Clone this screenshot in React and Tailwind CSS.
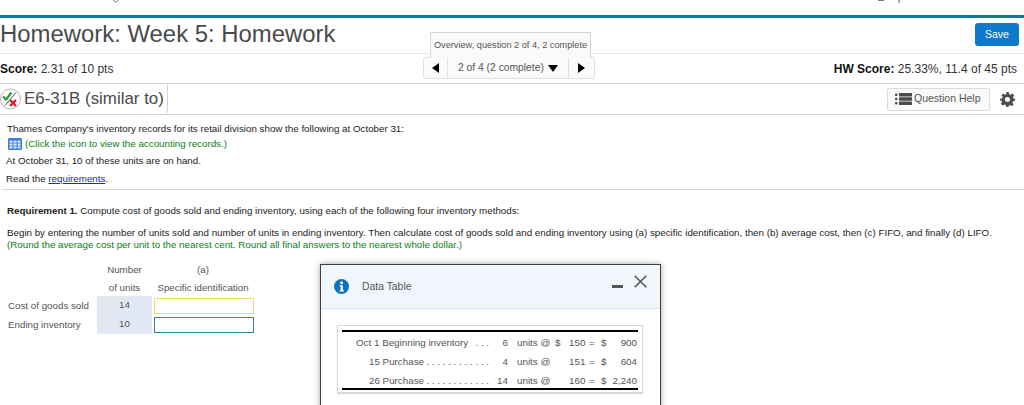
import React from "react";

const F = "font-['Liberation_Sans',Arial,sans-serif]";

function MixedIcon() {
  return (
    <svg width="21" height="22" viewBox="0 0 21 22" className="shrink-0">
      <circle cx="10.5" cy="11" r="10" fill="#fff" stroke="#b5b5b5" strokeWidth="1" />
      <path d="M16 4.5 L5 17.5" stroke="#555" strokeWidth="1" fill="none" />
      <path d="M3 8.5 L6 11.5 L11.5 4.5" stroke="#2f9e3f" strokeWidth="2.2" fill="none" />
      <path d="M10 12 L16 18 M16 12 L10 18" stroke="#d8202f" strokeWidth="2.4" fill="none" />
    </svg>
  );
}

function Gear() {
  return (
    <svg width="15" height="15" viewBox="0 0 24 24" fill="#4d4d4d">
      <path fillRule="evenodd" d="M10 0h4l.7 3.4 2.3 1 2.9-1.9 2.8 2.8-1.9 2.9 1 2.3L24 11v3l-3.2.7-1 2.3 1.9 2.9-2.8 2.8-2.9-1.9-2.3 1L14 24h-4l-.7-3.2-2.3-1-2.9 1.9-2.8-2.8 1.9-2.9-1-2.3L0 14v-3l3.2-.7 1-2.3-1.9-2.9 2.8-2.8 2.9 1.9 2.3-1zM12 8a4 4 0 1 0 0 8 4 4 0 0 0 0-8z" />
    </svg>
  );
}

function ListIcon() {
  return (
    <svg width="17" height="12" viewBox="0 0 17 12" fill="#4a4a4a">
      <rect x="0" y="0.5" width="2.5" height="2.5" rx="1" />
      <rect x="0" y="4.8" width="2.5" height="2.5" rx="1" />
      <rect x="0" y="9" width="2.5" height="2.5" rx="1" />
      <rect x="4" y="0" width="13" height="3.4" rx="0.6" />
      <rect x="4" y="4.3" width="13" height="3.4" rx="0.6" />
      <rect x="4" y="8.6" width="13" height="3.4" rx="0.6" />
    </svg>
  );
}

function GridIcon() {
  return (
    <svg width="14" height="12" viewBox="0 0 14 12" className="shrink-0">
      <rect width="14" height="12" rx="1.5" fill="#3d80d6" />
      <g fill="#dbe8fa">
        <rect x="1.5" y="2.6" width="3" height="2.1" /><rect x="5.5" y="2.6" width="3" height="2.1" /><rect x="9.5" y="2.6" width="3" height="2.1" />
        <rect x="1.5" y="5.5" width="3" height="2.1" /><rect x="5.5" y="5.5" width="3" height="2.1" /><rect x="9.5" y="5.5" width="3" height="2.1" />
        <rect x="1.5" y="8.4" width="3" height="2.1" /><rect x="5.5" y="8.4" width="3" height="2.1" /><rect x="9.5" y="8.4" width="3" height="2.1" />
      </g>
    </svg>
  );
}

const rows = [
  ["Oct 1 Beginning inventory", ". . .", "6", "$", "150", "900", "pl-[14px]"],
  ["15 Purchase", ". . . . . . . . . . . .", "4", "", "151", "604", "pl-[27px]"],
  ["26 Purchase", ". . . . . . . . . . . .", "14", "", "160", "2,240", "pl-[27px]"],
];

function DataTable() {
  return (
    <div className="absolute left-[320px] top-[264px] w-[341px] h-[160px] bg-white border border-[#3f3f3f] shadow-[0_0_6px_rgba(0,0,0,0.35)]">
      <div className="h-[44px] bg-[#f1f6fd] border-b border-[#cfe2f5] flex items-center pl-[13px] pr-[13px]">
        <svg width="15" height="15" viewBox="0 0 15 15" className="shrink-0">
          <circle cx="7.5" cy="7.5" r="7.5" fill="#0c71c3" />
          <circle cx="7.6" cy="3.7" r="1.5" fill="#fff" />
          <path d="M5.6 6.2h3.3v5h1v1.3H5.6v-1.3h1v-3.7h-1z" fill="#fff" />
        </svg>
        <span className="ml-[13px] text-[10.4px] text-[#555]">Data Table</span>
        <div className="ml-auto flex items-start gap-[11px] -mt-[10px]">
          <div className="w-[11px] h-[3px] bg-[#555] mt-[10px]" />
          <svg width="13" height="13" viewBox="0 0 13 13">
            <path d="M0.7 0.7 L12.3 12.3 M12.3 0.7 L0.7 12.3" stroke="#4a4a4a" strokeWidth="1.4" fill="none" />
          </svg>
        </div>
      </div>
      <div className="mt-[16px] ml-[16px] w-[306px] h-[68px] border border-[#d8d8d8] shadow-[0_1px_1px_rgba(0,0,0,0.15)] px-[4px] pt-[4px]">
        <div className="border-t-2 border-b-2 border-black h-[60px] pt-[2px] text-[9.8px] text-[#555]">
          {rows.map((r) => (
            <div key={r[0]} className="flex h-[19px] items-center whitespace-nowrap">
              <div className={`w-[147px] flex justify-between ${r[6]}`}>
                <span>{r[0]}</span>
                <span className="whitespace-pre">{r[1]}</span>
              </div>
              <span className="w-[19px] text-right">{r[2]}</span>
              <span className="ml-[9px] w-[38px]">units @</span>
              <span className="w-[14px]">{r[3]}</span>
              <span className="w-[20px]">{r[4]}</span>
              <span className="w-[12px]">=</span>
              <span className="w-[10px]">$</span>
              <span className="w-[26px] text-right">{r[5]}</span>
            </div>
          ))}
        </div>
      </div>
    </div>
  );
}

export default function App() {
  return (
    <div className={`${F} relative w-[1024px] h-[405px] overflow-hidden bg-white text-[#333]`}>
      <div className="h-[15px]" />
      <div className="h-[3px] bg-[#08799f]" />

      <div className="h-[36px] border-b border-[#e6e6e6] flex items-start justify-between">
        <h1 className="text-[23.9px] leading-[31px] text-[#4a4a4a]">Homework: Week 5: Homework</h1>
        <button className="mt-[5px] mr-[5px] w-[44px] h-[23px] rounded-[3px] bg-[#0f79cc] text-white text-[10.5px]">Save</button>
      </div>

      <div className="relative h-[30px] border-b border-[#cfd3dc] flex items-center justify-between text-[12px] text-[#333]">
        <div><b className="text-[#111]">Score:</b> 2.31 of 10 pts</div>
        <div className="absolute left-[423px] top-[3px] h-[22px] w-[172px] flex items-center border border-[#dfdfdf] rounded-[2px] bg-[#fafafa]">
          <div className="w-[24px] h-full border-r border-[#e4e4e4] flex items-center justify-center">
            <div className="w-0 h-0 border-y-[5px] border-y-transparent border-r-[7px] border-r-black" />
          </div>
          <div className="w-[121px] h-full border-r border-[#dcdcdc] flex items-center pl-[10px] text-[10.3px] text-[#555] whitespace-nowrap">
            2 of 4 (2 complete)
            <span className="ml-[4px] w-0 h-0 border-x-[5px] border-x-transparent border-t-[7px] border-t-black" />
          </div>
          <div className="flex-1 flex items-center justify-center">
            <div className="w-0 h-0 border-y-[5px] border-y-transparent border-l-[7px] border-l-black" />
          </div>
        </div>
        <div className="mr-[7px]"><b className="text-[#111]">HW Score:</b> 25.33%, 11.4 of 45 pts</div>
      </div>

      <div className="h-[31px] border-b border-[#cfd6e4] flex items-center">
        <div className="flex items-center h-[28px] border-r border-[#cfd3dc] pr-[3px]">
          <MixedIcon />
          <span className="ml-[3px] text-[16.9px] text-[#4a4a4a] whitespace-nowrap">E6-31B (similar to)</span>
        </div>
        <div className="ml-auto flex items-center mr-[9px]">
          <div className="w-[103px] h-[23px] border border-[#dcdcdc] rounded-[2px] bg-[#fafafa] flex items-center pl-[7px] gap-[2px] text-[10.5px] text-[#555] whitespace-nowrap">
            <ListIcon />
            Question Help
          </div>
          <div className="ml-[10px]"><Gear /></div>
        </div>
      </div>

      <div className="text-[9.77px] text-[#222] px-[7px]">
        <p className="mt-[8px] leading-[12px]">Thames Company's inventory records for its retail division show the following at October 31:</p>
        <p className="mt-[1px] ml-px leading-[15px] flex items-center gap-[3px] text-[#0b8012]"><GridIcon /><span>(Click the icon to view the accounting records.)</span></p>
        <p className="mt-[3px] leading-[14px] -ml-[1px]">At October 31, 10 of these units are on hand.</p>
        <p className="mt-[4px] leading-[14px] -ml-[1px]">Read the <a className="text-[#2323d8] underline">requirements</a>.</p>
      </div>
      <div className="ml-[2px] mt-[3px] h-px bg-[#cfd3e3]" />

      <div className="text-[9.77px] text-[#222] px-[7px]">
        <p className="mt-[15px] leading-[12px]"><b>Requirement 1.</b> Compute cost of goods sold and ending inventory, using each of the following four inventory methods:</p>
        <p className="mt-[10px] leading-[11px] whitespace-nowrap">Begin by entering the number of units sold and number of units in ending inventory. Then calculate cost of goods sold and ending inventory using (a) specific identification, then (b) average cost, then (c) FIFO, and finally (d) LIFO.</p>
        <p className="leading-[13px] text-[#0b8012]">(Round the average cost per unit to the nearest cent. Round all final answers to the nearest whole dollar.)</p>
      </div>

      <div className="mt-[9px] ml-[8px] w-[246px] text-[9.77px] text-[#555] grid grid-cols-[89px_55px_102px] grid-rows-[20px_16px_19px_19px] items-center">
        <div />
        <div className="text-center">Number</div>
        <div className="text-center">(a)</div>
        <div />
        <div className="text-center">of units</div>
        <div className="text-center whitespace-nowrap">Specific identification</div>
        <div className="pt-[2px] whitespace-nowrap">Cost of goods sold</div>
        <div className="bg-[#e1e7f3] h-full flex items-center justify-center">14</div>
        <div className="pl-[2px] h-full flex items-center"><div className="w-[100px] h-[16px] border border-[#f5dd6f] bg-white" /></div>
        <div className="pt-[2px] whitespace-nowrap">Ending inventory</div>
        <div className="bg-[#e1e7f3] h-full flex items-center justify-center">10</div>
        <div className="pl-[2px] h-full flex items-center"><div className="w-[100px] h-[16px] border border-[#2b88a8] bg-white" /></div>
      </div>

      <div className="absolute left-[430px] top-[32px] w-[161px] h-[26px] bg-[#fafafa] border border-[#d6d6d6] border-b-0 flex items-center justify-center text-[9.2px] text-[#555] whitespace-nowrap">
        Overview, question 2 of 4, 2 complete
      </div>

      <svg width="1024" height="4" className="absolute left-0 top-0" fill="none">
        <path d="M113.5 0 C114 2.5 117 2.5 118 0" stroke="#666" strokeWidth="1" />
        <path d="M878 0.5 H884" stroke="#777" strokeWidth="1" />
        <path d="M899 0 V3" stroke="#555" strokeWidth="1" />
      </svg>

      <DataTable />
    </div>
  );
}
